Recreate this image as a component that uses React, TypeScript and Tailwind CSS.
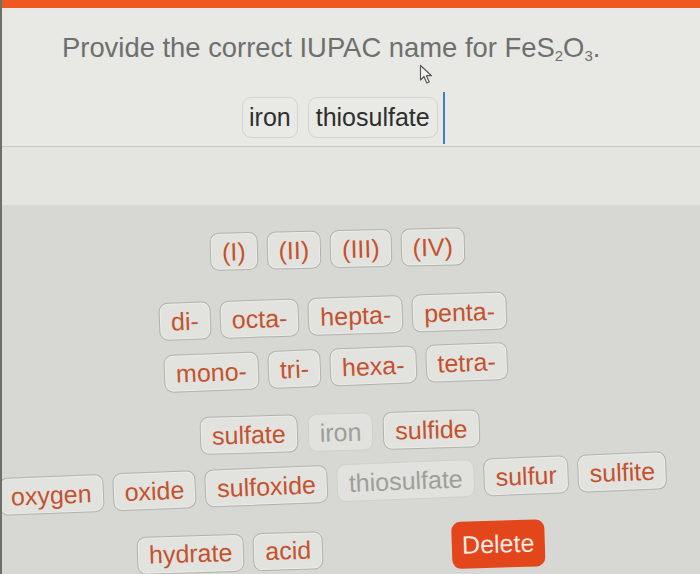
import React from "react";

type T = { label: string; faded?: boolean };

function Tile({ label, faded }: T) {
  return (
    <div
      className={
        faded
          ? "flex h-[38px] items-center rounded-[9px] border border-[#d0d0cb] bg-[#e1e1dd] px-[11px] text-[25px] leading-none text-[#9e9e9a]"
          : "flex h-[38px] items-center rounded-[9px] border border-[#b3b3ae] bg-[#e2e2de] px-[11px] text-[25px] leading-none text-[#c4522e] shadow-[inset_0_0_0_1px_#ecece8]"
      }
    >
      {label}
    </div>
  );
}

function Cursor() {
  return (
    <svg width="15" height="21" viewBox="0 0 15 21" className="absolute left-[417px] top-[64px]">
      <path
        d="M1.5 1.5 L1.5 16 L5 12.5 L7.8 19 L10.2 18 L7.5 11.7 L12.5 11.7 Z"
        fill="#f4f4f2"
        stroke="#5a5a5a"
        strokeWidth="1.2"
        strokeLinejoin="round"
      />
    </svg>
  );
}

export default function App() {
  return (
    <div
      className="relative flex h-[574px] w-[700px] flex-col overflow-hidden border-l-2 border-[#6e6e6b] bg-[#d7d7d3]"
      style={{ fontFamily: '"Liberation Sans", Arial, sans-serif' }}
    >
      <div className="h-[8px] shrink-0 bg-[#ef5820]" />
      <div className="flex h-[139px] shrink-0 flex-col border-b border-[#c6c6c2] bg-[#e8e8e4] pt-[24px]">
        <div className="h-[31px] pl-[60px] text-[27.4px] leading-[31px] text-[#6f6f6f]">
          Provide the correct IUPAC name for FeS
          <span className="relative top-[4px] text-[15px] leading-none">2</span>O
          <span className="relative top-[4px] text-[15px] leading-none">3</span>.
        </div>
        <div className="mt-[34px] flex h-[41px] items-center pl-[240px]">
          <div className="flex h-[41px] items-center rounded-[9px] border border-[#d2d2ce] bg-[#e9e9e5] px-[6px] text-[25px] leading-none text-[#2e2e2e]">
            iron
          </div>
          <div className="ml-[10px] flex h-[41px] items-center rounded-[9px] border border-[#d2d2ce] bg-[#e9e9e5] px-[7px] text-[25px] leading-none text-[#2e2e2e]">
            thiosulfate
          </div>
          <div className="ml-[5px] h-[52px] w-[2px] bg-[#3f7fc4]" />
        </div>
      </div>
      <div className="h-[58px] shrink-0 bg-[#e4e4e0]" />
      <div className="flex flex-col">
        <div className="ml-[208px] mt-[28px] flex w-fit origin-left rotate-[-1.3deg] gap-[9px]">
          <Tile label="(I)" />
          <Tile label="(II)" />
          <Tile label="(III)" />
          <Tile label="(IV)" />
        </div>
        <div className="ml-[157px] mt-[32px] flex w-fit origin-left rotate-[-1.9deg] gap-[9px]">
          <Tile label="di-" />
          <Tile label="octa-" />
          <Tile label="hepta-" />
          <Tile label="penta-" />
        </div>
        <div className="ml-[162px] mt-[14px] flex w-fit origin-left rotate-[-2.2deg] gap-[9px]">
          <Tile label="mono-" />
          <Tile label="tri-" />
          <Tile label="hexa-" />
          <Tile label="tetra-" />
        </div>
        <div className="ml-[198px] mt-[24px] flex w-fit origin-left rotate-[-1.6deg] gap-[10px]">
          <Tile label="sulfate" />
          <Tile faded label="iron" />
          <Tile label="sulfide" />
        </div>
        <div className="-ml-[3px] mt-[23px] flex w-fit origin-left rotate-[-2.3deg] gap-[9px]">
          <Tile label="oxygen" />
          <Tile label="oxide" />
          <Tile label="sulfoxide" />
          <Tile faded label="thiosulfate" />
          <Tile label="sulfur" />
          <Tile label="sulfite" />
        </div>
        <div className="ml-[135px] mt-[16px] flex w-fit origin-left rotate-[-1.8deg] items-center gap-[9px]">
          <Tile label="hydrate" />
          <Tile label="acid" />
          <div className="ml-[120px] flex h-[47px] items-center rounded-[9px] bg-[#e2461a] px-[10px] text-[25px] leading-none text-[#f6ebe6]">
            Delete
          </div>
        </div>
      </div>
      <Cursor />
    </div>
  );
}
